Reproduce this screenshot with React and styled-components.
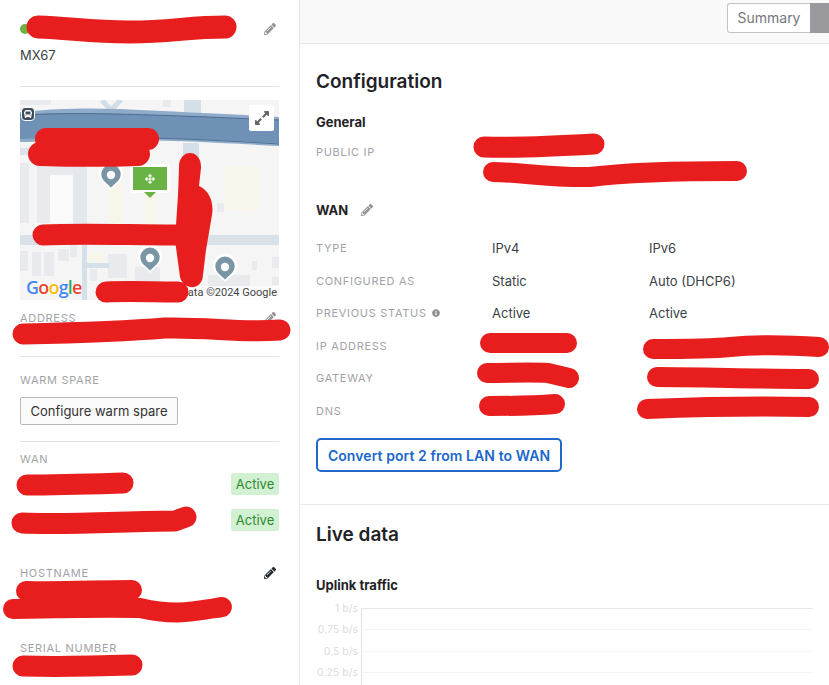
import React from 'react';
import styled, { createGlobalStyle } from 'styled-components';
import { FaPencilAlt, FaExpandAlt, FaInfoCircle, FaArrowsAlt, FaBus } from 'react-icons/fa';

const GlobalStyle = createGlobalStyle`
    html, body {
        margin: 0;
        height: 100%;
        overflow: hidden;
        background: #fff;
        font-family: Inter, "Liberation Sans", sans-serif;
        color: #333;
    }
`;

const scribbles = [
    { d: 'M38 27 C70 28 90 32 130 32 C170 32 190 27 225 27', w: 23 },
    { d: 'M46 139 L148 139', w: 22 },
    { d: 'M40 154 C70 155 110 155 138 154', w: 24 },
    { d: 'M43 235 C80 233 130 235 180 235', w: 21 },
    { d: 'M106 292 C130 291 150 292 178 292', w: 21 },
    { d: 'M23 334 C70 333 130 331 165 328 C210 327 240 333 280 330', w: 21 },
    { d: 'M27 485 C60 485 90 484 123 483', w: 21 },
    { d: 'M22 523 C70 525 130 521 175 521 L186 517', w: 21 },
    { d: 'M26 591 C60 592 100 590 132 590', w: 20 },
    { d: 'M13 609 C60 608 110 607 140 608 C175 616 190 612 222 607', w: 20 },
    { d: 'M23 666 C60 667 100 666 132 665', w: 21 },
    { d: 'M484 147 C520 148 560 146 594 144', w: 21 },
    { d: 'M493 172 C520 172 550 178 590 177 C630 172 680 171 737 171', w: 20 },
    { d: 'M490 343 L567 343', w: 20 },
    { d: 'M653 349 C680 349 710 349 730 347 C760 344 790 345 819 347', w: 20 },
    { d: 'M487 373 C510 373 530 372 548 373 L569 378', w: 20 },
    { d: 'M657 377 C700 377 760 379 809 379', w: 20 },
    { d: 'M489 406 C510 406 530 406 555 404', w: 20 },
    { d: 'M647 409 C700 407 760 406 809 407', w: 20 },
];

function Pin({ x, y }) {
    return (
        <g transform={`translate(${x} ${y})`}>
            <path d="M0 15 L-8.5 7 A12 12 0 1 1 8.5 7 Z" fill="#fff" />
            <path d="M0 12.5 L-7 6 A9.7 9.7 0 1 1 7 6 Z" fill="#7a95a3" />
            <circle r="4.2" fill="#fff" />
        </g>
    );
}

function MapDrawing() {
    const blocks = [
        [0, 63, 9, 60], [17, 67, 36, 56], [0, 151, 8, 20], [12, 152, 9, 24], [24, 152, 10, 24],
        [38, 149, 11, 12], [50, 145, 7, 12], [88, 154, 19, 24], [70, 169, 7, 12], [115, 167, 25, 20],
        [232, 161, 5, 9], [252, 157, 7, 11], [188, 175, 42, 12], [252, 177, 7, 8], [197, 103, 7, 9],
        [143, 0, 8, 7], [0, 0, 31, 5],
    ];
    return (
        <MapSvg viewBox="0 0 259 200">
            <rect width="259" height="200" fill="#f6f5f6" />
            {blocks.map(([x, y, w, h]) => (
                <rect key={`${x}-${y}`} x={x} y={y} width={w} height={h} fill="#e8eaed" />
            ))}
            <rect x="30" y="75" width="23" height="48" fill="#fafafb" />
            <rect x="53" y="45" width="14" height="80" fill="#e4e7ec" />
            <rect x="90" y="63" width="12" height="61" fill="#f8f5ea" />
            <rect x="123" y="65" width="13" height="59" fill="#f8f5ea" />
            <rect x="205" y="67" width="35" height="43" fill="#f8f5ea" />
            <rect x="70" y="152" width="15" height="10" fill="#f8f5ea" />
            <rect x="0" y="135" width="259" height="10" fill="#d8e0e8" />
            <rect x="0" y="48" width="20" height="7" fill="#dde3ea" />
            <rect x="62" y="145" width="5" height="55" fill="#d6e0e8" />
            <rect x="67" y="163" width="22" height="5" fill="#d6e0e8" />
            <rect x="164" y="0" width="17" height="16" fill="#d5dfe7" />
            <rect x="163" y="43" width="16" height="20" fill="#d5dfe7" />
            <path d="M82 0 L91 10 L101 0" fill="none" stroke="#d3dde6" strokeWidth="5" />
            <path d="M0 12 C40 8 70 8 100 9 C160 12 210 14 259 17 L259 46 C200 43 130 39 70 40 C40 41 20 42 0 42 Z" fill="#8eabc9" />
            <path d="M0 15 C60 12 120 14 259 20 L259 43 C190 40 120 36 60 37 L0 39 Z" fill="#6f91b5" />
            <path d="M0 15 C60 12 120 14 259 20" fill="none" stroke="#3f6288" strokeWidth="0.8" />
            <path d="M110 38 C160 38 210 41 259 44" fill="none" stroke="#3f6288" strokeWidth="0.8" />
            <Pin x={91} y={75} />
            <Pin x={130} y={158} />
            <Pin x={205} y={167} />
        </MapSvg>
    );
}

function Letter({ c, children }) {
    return <LogoLetter $c={c}>{children}</LogoLetter>;
}

function App() {
    return (
        <Page>
            <GlobalStyle />
            <Sidebar>
                <Header>
                    <TitleRow>
                        <StatusDot />
                        <Grow />
                        <EditIcon><FaPencilAlt /></EditIcon>
                    </TitleRow>
                    <Model>MX67</Model>
                </Header>
                <MapBox>
                    <MapDrawing />
                    <BusBadge><FaBus /></BusBadge>
                    <ExpandButton><FaExpandAlt /></ExpandButton>
                    <DeviceMarker><FaArrowsAlt /></DeviceMarker>
                    <GoogleLogo>
                        <Letter c="#4285f4">G</Letter>
                        <Letter c="#ea4335">o</Letter>
                        <Letter c="#fbbc05">o</Letter>
                        <Letter c="#4285f4">g</Letter>
                        <Letter c="#34a853">l</Letter>
                        <Letter c="#ea4335">e</Letter>
                    </GoogleLogo>
                    <Attribution>Map data ©2024 Google</Attribution>
                </MapBox>
                <AddressBlock>
                    <LabelRow>
                        <Label>Address</Label>
                        <EditIcon><FaPencilAlt /></EditIcon>
                    </LabelRow>
                </AddressBlock>
                <Block>
                    <Label>Warm spare</Label>
                    <GhostButton>Configure warm spare</GhostButton>
                </Block>
                <WanBlock>
                    <Label>WAN</Label>
                    <WanRow><Badge>Active</Badge></WanRow>
                    <WanRow><Badge>Active</Badge></WanRow>
                </WanBlock>
                <HostBlock>
                    <LabelRow>
                        <Label>Hostname</Label>
                        <EditIcon $dark><FaPencilAlt /></EditIcon>
                    </LabelRow>
                </HostBlock>
                <SerialBlock>
                    <Label>Serial number</Label>
                </SerialBlock>
            </Sidebar>
            <Main>
                <TopBar>
                    <Tabs>
                        <Tab>Summary</Tab>
                        <ActiveTab />
                    </Tabs>
                </TopBar>
                <Section>
                    <Heading>Configuration</Heading>
                    <SubHeading>General</SubHeading>
                    <PublicIp><Label>Public IP</Label></PublicIp>
                    <WanHeading>
                        <SubHeading as="span">WAN</SubHeading>
                        <EditIcon><FaPencilAlt /></EditIcon>
                    </WanHeading>
                    <ConfigGrid>
                        <Label>Type</Label><Value>IPv4</Value><Value>IPv6</Value>
                        <Label>Configured as</Label><Value>Static</Value><Value>Auto (DHCP6)</Value>
                        <Label>Previous status <InfoIcon><FaInfoCircle /></InfoIcon></Label><Value>Active</Value><Value>Active</Value>
                        <Label>IP address</Label><Value /><Value />
                        <Label>Gateway</Label><Value /><Value />
                        <Label>DNS</Label><Value /><Value />
                    </ConfigGrid>
                    <OutlineButton>Convert port 2 from LAN to WAN</OutlineButton>
                </Section>
                <LiveSection>
                    <Heading>Live data</Heading>
                    <ChartTitle>Uplink traffic</ChartTitle>
                    <Chart>
                        {['1 b/s', '0.75 b/s', '0.5 b/s', '0.25 b/s'].map((tick, i) => (
                            <ChartRow key={tick}>
                                <Tick>{tick}</Tick>
                                <GridLine $first={i === 0} />
                            </ChartRow>
                        ))}
                    </Chart>
                </LiveSection>
            </Main>
            <Scribbles viewBox="0 0 829 685">
                {scribbles.map(s => (
                    <path key={s.d} d={s.d} strokeWidth={s.w} />
                ))}
                <FilledScribble d="M179 168 C178 148 202 148 201 168 L199 186 C210 191 214 203 212 215 L206 250 L203 275 C202 291 184 291 180 277 L175 240 L178 195 Z" />
            </Scribbles>
        </Page>
    );
}

const Page = styled.div`
    position: relative;
    display: grid;
    grid-template-columns: 300px 1fr;
    width: 829px;
    height: 685px;
    overflow: hidden;
`;

const Sidebar = styled.aside`
    box-sizing: border-box;
    border-right: 1px solid #e4e6e8;
    padding: 0 20px;
    height: 685px;
    overflow: hidden;
`;

const Header = styled.header`
    height: 87px;
    box-sizing: border-box;
    padding-top: 21px;
    border-bottom: 1px solid #e1e3e6;
`;

const TitleRow = styled.div`
    display: flex;
    align-items: center;
    height: 16px;
`;

const StatusDot = styled.span`
    width: 10px;
    height: 10px;
    border-radius: 50%;
    background: #6cb33f;
`;

const Grow = styled.span`
    flex: 1;
`;

const EditIcon = styled.span`
    display: inline-flex;
    font-size: 12px;
    padding-right: 3px;
    color: ${p => (p.$dark ? '#222b33' : '#949494')};
`;

const Model = styled.div`
    margin-top: 1px;
    font-size: 13px;
    line-height: 34px;
    color: #3a3f45;
`;

const MapBox = styled.div`
    position: relative;
    margin-top: 13px;
    height: 200px;
    overflow: hidden;
`;

const MapSvg = styled.svg`
    display: block;
    width: 259px;
    height: 200px;
`;

const BusBadge = styled.div`
    position: absolute;
    left: 1px;
    top: 7px;
    width: 12px;
    height: 12px;
    display: flex;
    align-items: center;
    justify-content: center;
    background: #3e4d5c;
    border: 1px solid #fff;
    border-radius: 4px;
    color: #fff;
    font-size: 8px;
`;

const ExpandButton = styled.div`
    position: absolute;
    right: 5px;
    top: 5px;
    width: 25px;
    height: 26px;
    display: flex;
    align-items: center;
    justify-content: center;
    background: #fff;
    border-radius: 2px;
    color: #666;
    font-size: 16px;
`;

const DeviceMarker = styled.div`
    position: absolute;
    left: 110px;
    top: 64px;
    width: 34px;
    height: 23px;
    display: flex;
    align-items: center;
    justify-content: center;
    background: #69b345;
    border: 3px solid #fff;
    border-radius: 2px;
    color: #fff;
    font-size: 10px;

    &::after {
        content: '';
        position: absolute;
        left: 11px;
        bottom: -8px;
        border-left: 6px solid transparent;
        border-right: 6px solid transparent;
        border-top: 6px solid #69b345;
    }
`;

const GoogleLogo = styled.div`
    position: absolute;
    left: 6px;
    bottom: 1px;
    font-family: "Open Sans", "Liberation Sans", sans-serif;
    font-size: 18px;
    font-weight: 600;
    line-height: 24px;
    letter-spacing: -0.8px;
    text-shadow: 0 0 2px #fff, 0 0 2px #fff;
`;

const LogoLetter = styled.span`
    color: ${p => p.$c};
`;

const Attribution = styled.div`
    position: absolute;
    right: 0;
    bottom: 0;
    padding: 0 2px;
    background: rgba(255, 255, 255, 0.7);
    font-family: Roboto, "Liberation Sans", sans-serif;
    font-size: 11px;
    line-height: 14px;
    color: #444;
`;

const Label = styled.div`
    font-size: 11px;
    line-height: 14px;
    letter-spacing: 0.7px;
    text-transform: uppercase;
    color: #9fa3a8;
`;

const LabelRow = styled.div`
    display: flex;
    justify-content: space-between;
    align-items: center;
`;

const AddressBlock = styled.section`
    height: 57px;
    box-sizing: border-box;
    padding-top: 11px;
    border-bottom: 1px solid #e1e3e6;
`;

const Block = styled.section`
    height: 85px;
    box-sizing: border-box;
    padding-top: 16px;
    border-bottom: 1px solid #e1e3e6;
`;

const GhostButton = styled.button`
    display: block;
    margin-top: 10px;
    width: 158px;
    height: 28px;
    padding: 0;
    background: #fafafa;
    border: 1px solid #b9b9b9;
    border-radius: 2px;
    font: 13px Inter, "Liberation Sans", sans-serif;
    color: #333;
`;

const WanBlock = styled.section`
    height: 117px;
    box-sizing: border-box;
    padding-top: 10px;
`;

const WanRow = styled.div`
    display: flex;
    justify-content: flex-end;
    margin-bottom: 14px;

    &:nth-child(2) {
        margin-top: 7px;
    }
`;

const Badge = styled.span`
    width: 48px;
    height: 22px;
    line-height: 22px;
    text-align: center;
    background: #d2f0d2;
    border-radius: 2px;
    font-size: 13px;
    color: #2f8a2f;
`;

const HostBlock = styled.section`
    height: 82px;
    box-sizing: border-box;
    padding-top: 7px;
`;

const SerialBlock = styled.section`
`;

const Main = styled.main`
    min-width: 0;
`;

const TopBar = styled.div`
    height: 44px;
    box-sizing: border-box;
    background: #f9f9f9;
    border-bottom: 1px solid #e4e6e8;
    padding-top: 3px;
`;

const Tabs = styled.div`
    display: flex;
    margin-left: 427px;
    height: 30px;
`;

const Tab = styled.div`
    box-sizing: border-box;
    width: 83px;
    height: 30px;
    line-height: 28px;
    text-align: center;
    background: #fff;
    border: 1px solid #c4c4c4;
    border-right: none;
    border-radius: 3px 0 0 3px;
    font-size: 14px;
    color: #73787e;
`;

const ActiveTab = styled.div`
    flex: 1;
    background: #9a9a9e;
`;

const Section = styled.section`
    box-sizing: border-box;
    height: 461px;
    padding: 27px 16px 0;
    border-bottom: 1px solid #e9eaec;
`;

const Heading = styled.h2`
    margin: 0;
    font-size: 19px;
    line-height: 22px;
    font-weight: 600;
    color: #1f2226;
`;

const SubHeading = styled.h3`
    margin: 21px 0 0;
    font-size: 13px;
    line-height: 16px;
    font-weight: 700;
    color: #1f2226;
`;

const PublicIp = styled.div`
    margin-top: 15px;
    height: 57px;
`;

const WanHeading = styled.div`
    display: flex;
    align-items: center;
    gap: 13px;
    height: 16px;

    h3, span:first-child {
        margin: 0;
    }
`;

const ConfigGrid = styled.div`
    display: grid;
    grid-template-columns: 176px 157px 1fr;
    grid-auto-rows: 32.5px;
    align-items: center;
    margin-top: 14px;
`;

const Value = styled.div`
    font-size: 13px;
    line-height: 18px;
    color: #3a3f45;
`;

const InfoIcon = styled.span`
    font-size: 8px;
    color: #8a8f94;
    margin-left: 1px;
`;

const OutlineButton = styled.button`
    display: block;
    margin-top: 11px;
    width: 246px;
    height: 34px;
    padding: 0;
    background: #fff;
    border: 2px solid #2068c9;
    border-radius: 5px;
    font: 600 14px Inter, "Liberation Sans", sans-serif;
    letter-spacing: 0.07px;
    color: #2068c9;
`;

const LiveSection = styled.section`
    padding: 19px 16px 0;
`;

const ChartTitle = styled.h3`
    margin: 31px 0 0;
    font-size: 13px;
    line-height: 16px;
    font-weight: 700;
    color: #1f2226;
`;

const Chart = styled.div`
    margin-top: 15px;
`;

const ChartRow = styled.div`
    display: grid;
    grid-template-columns: 45px 1fr;
    height: 21.3px;
`;

const Tick = styled.span`
    margin-top: -6px;
    padding-right: 3px;
    text-align: right;
    font-size: 10.5px;
    line-height: 14px;
    color: #dcdcdc;
`;

const GridLine = styled.div`
    border-left: 1px solid #e2e2e2;
    border-top: 1px solid ${p => (p.$first ? '#e6e6e6' : '#f4f4f4')};
`;

const Scribbles = styled.svg`
    position: absolute;
    left: 0;
    top: 0;
    width: 829px;
    height: 685px;
    pointer-events: none;

    path {
        fill: none;
        stroke: #e81e1e;
        stroke-linecap: round;
        stroke-linejoin: round;
    }
`;

const FilledScribble = styled.path`
    && {
        fill: #e81e1e;
        stroke: none;
    }
`;

export default App;
